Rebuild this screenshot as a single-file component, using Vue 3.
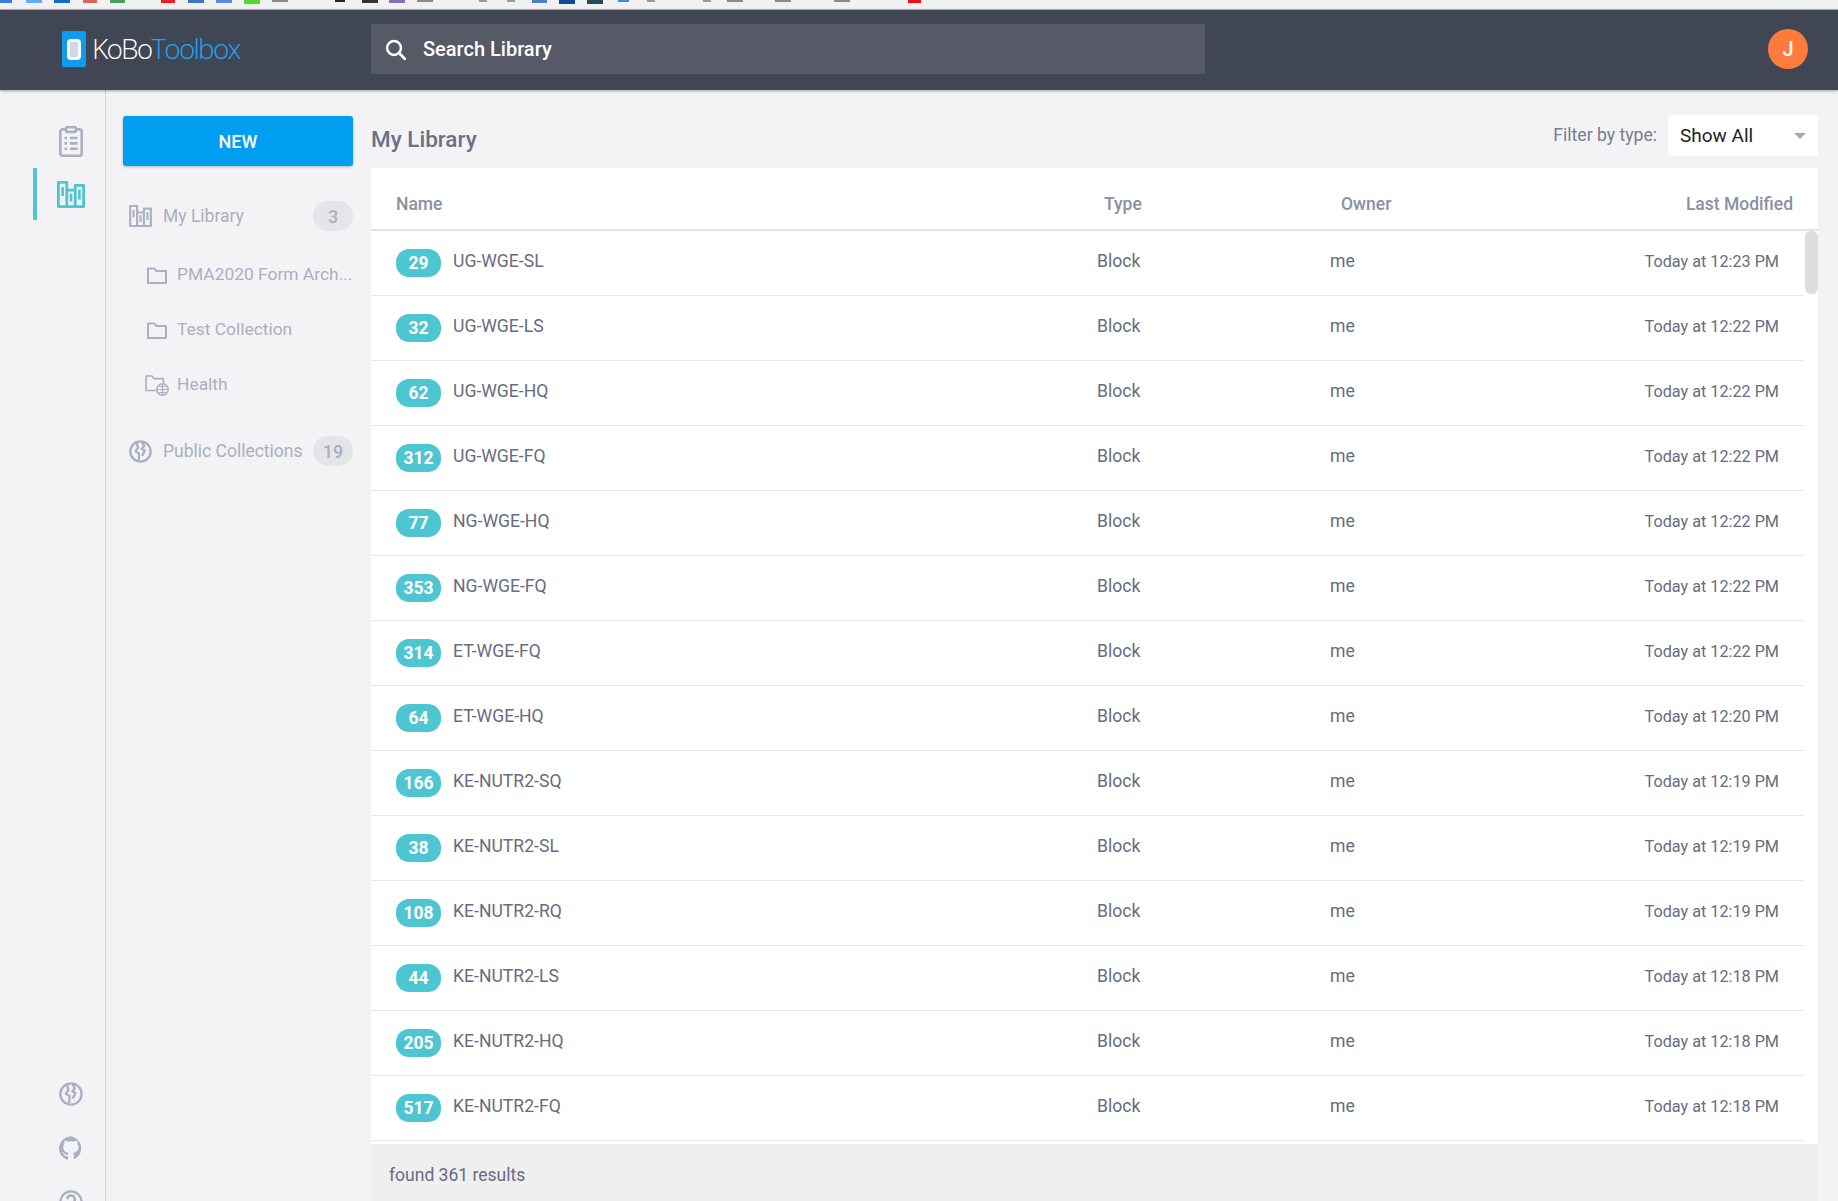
<template>
  <div class="page">
    <!-- bottom edge of the browser bookmarks bar -->
    <div class="bookmarks">
      <span
        v-for="(b, i) in bookmarks"
        :key="i"
        class="fav"
        :style="{ marginLeft: b.gap + 'px', width: b.w + 'px', height: b.h + 'px', background: b.color }"
      ></span>
    </div>

    <header class="topbar">
      <div class="logo">
        <span class="logo-mark"><span class="logo-hole"></span></span>
        <span class="logo-text">KoBo<em>Toolbox</em></span>
      </div>
      <div class="search">
        <svg class="search-icon" viewBox="0 0 20 20" width="21" height="21">
          <circle cx="8.6" cy="8.6" r="6.6" fill="none" stroke="#fff" stroke-width="2.4" />
          <path d="M13.6 13.6 L19 19" stroke="#fff" stroke-width="2.6" stroke-linecap="round" />
        </svg>
        <span>Search Library</span>
      </div>
      <div class="avatar">J</div>
    </header>

    <div class="content">
      <nav class="rail">
        <svg class="rail-form" viewBox="0 0 24 31" width="24" height="31" fill="none" stroke="#abb0c0" stroke-width="2.6">
          <rect x="1.3" y="3.4" width="21.4" height="26.3" rx="2.2" />
          <rect x="7" y="1.3" width="10" height="4.6" rx="1" fill="#f3f3f6" />
          <path d="M5.5 12h2.6M11 12h7.6M5.5 17.4h2.6M11 17.4h7.6M5.5 22.8h2.6M11 22.8h7.6" />
        </svg>
        <div class="rail-active">
          <svg viewBox="0 0 28 27" width="28" height="27" fill="none" stroke="#4dc6d1" stroke-width="2.8" stroke-linejoin="round">
            <path d="M1.4 1.4h8.4v24.2H1.4zM9.800 9.200h8.400v16.400H9.800zM18.200 4.400h8.400v21.200h-8.400z" />
            <path d="M5.600 6v9M14 12.500v8M22.400 8.500v10" stroke-width="2.600" />
          </svg>
        </div>
        <svg class="rail-globe" viewBox="0 0 24 24" width="24" height="24" fill="none" stroke="#abb0c0" stroke-width="2.400">
          <circle cx="12" cy="12" r="10.600" />
          <path d="M8 2.500 L9.400 8 L6.800 11.800 L10.600 14 L10.200 21 M13.500 2 L15.800 6.200 L13.200 9.400 L16.600 11 L13.600 16.600" stroke-linejoin="round" />
        </svg>
        <svg class="rail-github" viewBox="0 0 24 24" width="24" height="24">
          <path fill="#abb0c0" d="M12 .3a12 12 0 0 0-3.800 23.400c.6.100.8-.3.8-.6v-3c-3.300.7-4-1.400-4-1.400-.6-1.400-1.400-1.800-1.400-1.800-1.100-.7.100-.7.100-.7 1.200.1 1.800 1.200 1.800 1.200 1.100 1.800 2.800 1.300 3.500 1 .1-.8.4-1.300.8-1.600-2.700-.3-5.500-1.300-5.500-5.900 0-1.300.5-2.400 1.200-3.200-.1-.3-.5-1.500.1-3.200 0 0 1-.3 3.300 1.200a11.500 11.500 0 0 1 6 0c2.300-1.500 3.300-1.200 3.300-1.200.6 1.700.2 2.900.1 3.200.8.8 1.200 1.900 1.200 3.200 0 4.600-2.800 5.600-5.500 5.900.4.400.8 1.100.8 2.200v3.300c0 .3.2.7.8.6A12 12 0 0 0 12 .3z" />
        </svg>
        <svg class="rail-help" viewBox="0 0 24 24" width="24" height="24" fill="none" stroke="#abb0c0" stroke-width="2.400">
          <circle cx="12" cy="12" r="10.600" />
          <path d="M8.200 9.200a3.800 3.800 0 1 1 5.600 3.400c-1.200.7-1.800 1.400-1.800 2.800M12 17.500v2" />
        </svg>
      </nav>

      <aside class="side">
        <button class="new-btn">NEW</button>

        <div class="side-row side-top">
          <svg class="side-icon" viewBox="0 0 28 27" width="23" height="22" fill="none" stroke="#abb0c0" stroke-width="2.600" stroke-linejoin="round">
            <path d="M1.300 1.300h8.500v24.400H1.300zM9.800 9.200h8.400v16.500H9.800zM18.200 4.400h8.500v21.300h-8.500z" />
            <path d="M5.500 6v9M14 12.500v8M22.500 8.500v10" />
          </svg>
          <span class="side-label">My Library</span>
          <span class="count">3</span>
        </div>

        <div class="sub-list">
          <div v-for="c in collections" :key="c.name" class="sub-row">
            <span class="sub-icon">
              <svg v-if="!c.shared" viewBox="0 0 20 17" width="20" height="17" fill="none" stroke="#abb0c0" stroke-width="2" stroke-linejoin="round">
                <path d="M1 16V1.500h6.400l2 2.600H19V16z" />
              </svg>
              <svg v-else viewBox="0 0 24 21" width="24" height="21" fill="none" stroke="#abb0c0" stroke-width="1.600" stroke-linejoin="round">
                <path d="M11 15.500H1V1h6l2 2.600h9.500V8" />
                <circle cx="17.500" cy="14.500" r="5.700" />
                <path d="M11.800 14.500h11.400M17.500 8.800v11.400M14 10.800c2 1.200 5 1.200 7 0M14 18.200c2-1.200 5-1.200 7 0" stroke-width="1.100" />
              </svg>
            </span>
            <span class="sub-label">{{ c.name }}</span>
          </div>
        </div>

        <div class="side-row side-public">
          <svg class="side-icon" viewBox="0 0 24 24" width="23" height="23" fill="none" stroke="#abb0c0" stroke-width="2.400" stroke-linejoin="round">
            <circle cx="12" cy="12" r="10.600" />
            <path d="M8 2.500 L9.400 8 L6.800 11.800 L10.600 14 L10.200 21 M13.500 2 L15.800 6.200 L13.200 9.400 L16.600 11 L13.600 16.600" />
          </svg>
          <span class="side-label">Public Collections</span>
          <span class="count">19</span>
        </div>
      </aside>

      <main class="main">
        <div class="main-head">
          <h1>My Library</h1>
          <label class="filter-label">Filter by type:</label>
          <div class="select">
            <span>Show All</span>
            <i class="caret"></i>
          </div>
        </div>

        <section class="table">
          <div class="thead">
            <span>Name</span>
            <span>Type</span>
            <span>Owner</span>
            <span class="right">Last Modified</span>
          </div>
          <div class="tbody">
            <div v-for="r in rows" :key="r.name" class="row">
              <div class="cell-name">
                <span class="qcount">{{ r.count }}</span>
                <span class="txt">{{ r.name }}</span>
              </div>
              <span class="txt">Block</span>
              <span class="txt">me</span>
              <span class="txt right date">{{ r.date }}</span>
            </div>
            <div class="thumb"></div>
          </div>
        </section>

        <footer class="results">found 361 results</footer>
      </main>
    </div>
  </div>
</template>

<script setup>
const rawBookmarks = [
  [0, 12, 3, '#3b7fd6'], [26, 16, 3, '#62aef0'], [54, 16, 3, '#0f6fc6'], [83, 14, 3, '#d9665c'],
  [110, 15, 3, '#4a9f5a'], [161, 14, 3, '#ee1c25'], [188, 16, 3, '#3f78c4'], [216, 16, 3, '#5b8fd8'],
  [244, 16, 4, '#55d62a'], [272, 16, 2, '#8a8a8a'], [335, 10, 2, '#222222'], [362, 16, 3, '#333333'],
  [389, 16, 3, '#8a6bb8'], [417, 16, 2, '#8a8a8a'], [479, 8, 2, '#999999'], [507, 8, 2, '#999999'],
  [532, 15, 3, '#4f7fb5'], [559, 16, 4, '#0d4c96'], [587, 16, 4, '#244b5e'], [618, 11, 2, '#3a8fd8'],
  [647, 8, 2, '#999999'], [703, 8, 2, '#999999'], [727, 16, 2, '#8a8a8a'], [775, 16, 2, '#8a8a8a'],
  [834, 16, 2, '#8a8a8a'], [908, 13, 3, '#ee1111']
]

// each favicon sits after the previous one, so turn x positions into gaps
const bookmarks = rawBookmarks.map(([x, w, h, color], i) => {
  const prev = rawBookmarks[i - 1]
  return { gap: prev ? x - prev[0] - prev[1] : x, w, h, color }
})

const collections = [
  { name: 'PMA2020 Form Arch...', shared: false },
  { name: 'Test Collection', shared: false },
  { name: 'Health', shared: true }
]

const rows = [
  { count: 29, name: 'UG-WGE-SL', date: 'Today at 12:23 PM' },
  { count: 32, name: 'UG-WGE-LS', date: 'Today at 12:22 PM' },
  { count: 62, name: 'UG-WGE-HQ', date: 'Today at 12:22 PM' },
  { count: 312, name: 'UG-WGE-FQ', date: 'Today at 12:22 PM' },
  { count: 77, name: 'NG-WGE-HQ', date: 'Today at 12:22 PM' },
  { count: 353, name: 'NG-WGE-FQ', date: 'Today at 12:22 PM' },
  { count: 314, name: 'ET-WGE-FQ', date: 'Today at 12:22 PM' },
  { count: 64, name: 'ET-WGE-HQ', date: 'Today at 12:20 PM' },
  { count: 166, name: 'KE-NUTR2-SQ', date: 'Today at 12:19 PM' },
  { count: 38, name: 'KE-NUTR2-SL', date: 'Today at 12:19 PM' },
  { count: 108, name: 'KE-NUTR2-RQ', date: 'Today at 12:19 PM' },
  { count: 44, name: 'KE-NUTR2-LS', date: 'Today at 12:18 PM' },
  { count: 205, name: 'KE-NUTR2-HQ', date: 'Today at 12:18 PM' },
  { count: 517, name: 'KE-NUTR2-FQ', date: 'Today at 12:18 PM' }
]
</script>

<style>
html, body {
  margin: 0;
  overflow: hidden;
}
</style>

<style scoped>
.page {
  display: flex;
  flex-direction: column;
  height: 100vh;
  overflow: hidden;
  background: #f3f3f6;
  font-family: Roboto, "Liberation Sans", sans-serif;
}

.bookmarks {
  display: flex;
  flex: 0 0 10px;
  box-sizing: border-box;
  align-items: flex-start;
  background: #f1f1f1;
  border-bottom: 1px solid #b4b4b4;
}
.fav {
  display: block;
  flex: none;
}

.topbar {
  display: flex;
  flex: 0 0 80px;
  align-items: center;
  box-sizing: border-box;
  padding-bottom: 2px;
  position: relative;
  z-index: 2;
  background: #404653;
  box-shadow: 0 1px 3px rgba(0, 0, 0, 0.35);
}
.logo {
  display: flex;
  align-items: center;
  width: 371px;
  padding-left: 62px;
  box-sizing: border-box;
}
.logo-mark {
  display: flex;
  align-items: center;
  justify-content: center;
  width: 24px;
  height: 36px;
  border-radius: 2px;
  background: #0c9df0;
}
.logo-hole {
  width: 8px;
  height: 15px;
  border: 3px solid #fff;
  border-radius: 4px;
  background: #cfd8e4;
}
.logo-text {
  margin-left: 6px;
  margin-top: -3px;
  color: #fff;
  font-family: "Open Sans", sans-serif;
  font-size: 28px;
  font-weight: 300;
  letter-spacing: -1.8px;
}
.logo-text em {
  color: #1ba6f2;
  font-style: normal;
}
.search {
  display: flex;
  align-items: center;
  width: 834px;
  height: 50px;
  background: #565a66;
  color: #fff;
  font-size: 20px;
  font-weight: 500;
}
.search-icon {
  margin-left: 14px;
  margin-right: 17px;
}
.avatar {
  display: flex;
  align-items: center;
  justify-content: center;
  width: 40px;
  height: 40px;
  margin-left: auto;
  margin-right: 30px;
  border-radius: 50%;
  background: #ff7a3d;
  color: #fff;
  font-size: 20px;
  font-weight: 500;
}

.content {
  display: flex;
  flex: 1;
  min-height: 0;
}

.rail {
  display: flex;
  flex: 0 0 105px;
  flex-direction: column;
  align-items: center;
  padding-top: 36px;
  border-right: 1px solid #d6d6dc;
  overflow: hidden;
}
.rail svg {
  flex: none;
}
.rail-form {
  margin-left: 36px;
}
.rail-active {
  display: flex;
  flex: none;
  align-items: center;
  align-self: flex-start;
  box-sizing: border-box;
  height: 52px;
  margin-top: 11px;
  margin-left: 33px;
  padding-left: 20px;
  border-left: 4px solid #4dc6d1;
}
.rail-globe {
  margin-top: 862px;
  margin-left: 37px;
}
.rail-github {
  margin-top: 30px;
  margin-left: 37px;
}
.rail-help {
  margin-top: 30px;
  margin-left: 37px;
}

.side {
  flex: 0 0 265px;
  min-width: 0;
  box-sizing: border-box;
  padding: 26px 18px 0 17px;
}
.new-btn {
  display: block;
  width: 230px;
  height: 50px;
  padding: 0;
  border: 0;
  border-radius: 3px;
  background: #009ef0;
  box-shadow: 0 1px 3px rgba(0, 0, 0, 0.25);
  color: #fff;
  font-family: inherit;
  font-size: 18px;
  font-weight: 500;
}
.side-row {
  display: flex;
  align-items: center;
  height: 30px;
  padding-left: 6px;
  color: #a9afc0;
  font-size: 17.5px;
}
.side-top {
  margin-top: 35px;
}
.side-public {
  margin-top: 25px;
}
.side-icon {
  flex: none;
}
.side-label {
  margin-left: 11px;
  white-space: nowrap;
}
.count {
  display: flex;
  align-items: center;
  justify-content: center;
  width: 40px;
  height: 30px;
  margin-left: auto;
  border-radius: 15px;
  background: #e5e5e9;
  font-size: 18px;
  font-weight: 500;
}
.sub-list {
  margin-top: 15px;
}
.sub-row {
  display: flex;
  align-items: center;
  height: 55px;
  color: #a9afc0;
  font-size: 17.4px;
}
.sub-icon {
  display: flex;
  flex: 0 0 24px;
  align-items: center;
  justify-content: center;
  margin-left: 22px;
  margin-top: 3px;
}
.sub-label {
  margin-left: 8px;
  white-space: nowrap;
}

.main {
  display: flex;
  flex: 1;
  flex-direction: column;
  min-width: 0;
  padding-right: 20px;
}
.main-head {
  display: flex;
  flex: 0 0 78px;
  align-items: flex-start;
  box-sizing: border-box;
  padding-top: 25px;
}
h1 {
  margin: 7px auto 0 0;
  color: #6b7085;
  font-size: 22.5px;
  font-weight: 500;
  line-height: 34px;
}
.filter-label {
  margin-top: 8px;
  margin-right: 11px;
  color: #777c90;
  font-size: 17.6px;
  line-height: 24px;
}
.select {
  display: flex;
  align-items: center;
  justify-content: space-between;
  box-sizing: border-box;
  width: 150px;
  height: 41px;
  padding: 0 12px;
  border-radius: 2px;
  background: #fff;
  color: #222;
  font-size: 19px;
}
.caret {
  width: 0;
  height: 0;
  border-top: 6px solid #a8a8a8;
  border-left: 6.5px solid transparent;
  border-right: 6.5px solid transparent;
}

.table {
  display: flex;
  flex: 0 0 976px;
  flex-direction: column;
  background: #fff;
}
.thead {
  display: grid;
  flex: 0 0 63px;
  grid-template-columns: 708px 237px 1fr 200px;
  align-items: center;
  box-sizing: border-box;
  padding: 10px 25px 0;
  border-bottom: 2px solid #e2e2e8;
  color: #8a8fa3;
  font-size: 17.5px;
  font-weight: 500;
}
.right {
  text-align: right;
}
.tbody {
  position: relative;
  flex: 1;
  overflow: hidden;
}
.row {
  display: grid;
  grid-template-columns: 701px 233px 1fr 200px;
  align-items: center;
  box-sizing: border-box;
  height: 65px;
  margin-right: 14px;
  padding: 0 25px;
  border-bottom: 1px solid #e8e8ec;
  color: #676c80;
  font-size: 17.6px;
}
.txt {
  padding-bottom: 4px;
}
.date {
  font-size: 16.2px;
}
.cell-name {
  display: flex;
  align-items: center;
}
.qcount {
  width: 45px;
  height: 28px;
  margin-right: 12px;
  border-radius: 13px;
  background: #4dc6d1;
  color: #fff;
  font-size: 17.5px;
  font-weight: 700;
  line-height: 29px;
  text-align: center;
}
.thumb {
  position: absolute;
  top: 0;
  right: 0;
  width: 13px;
  height: 63px;
  border-radius: 6px;
  background: #dcdcdc;
}
.results {
  flex: 1;
  padding: 19px 18px 0;
  background: #efefef;
  color: #676c80;
  font-size: 17.5px;
  line-height: 24px;
}
</style>
